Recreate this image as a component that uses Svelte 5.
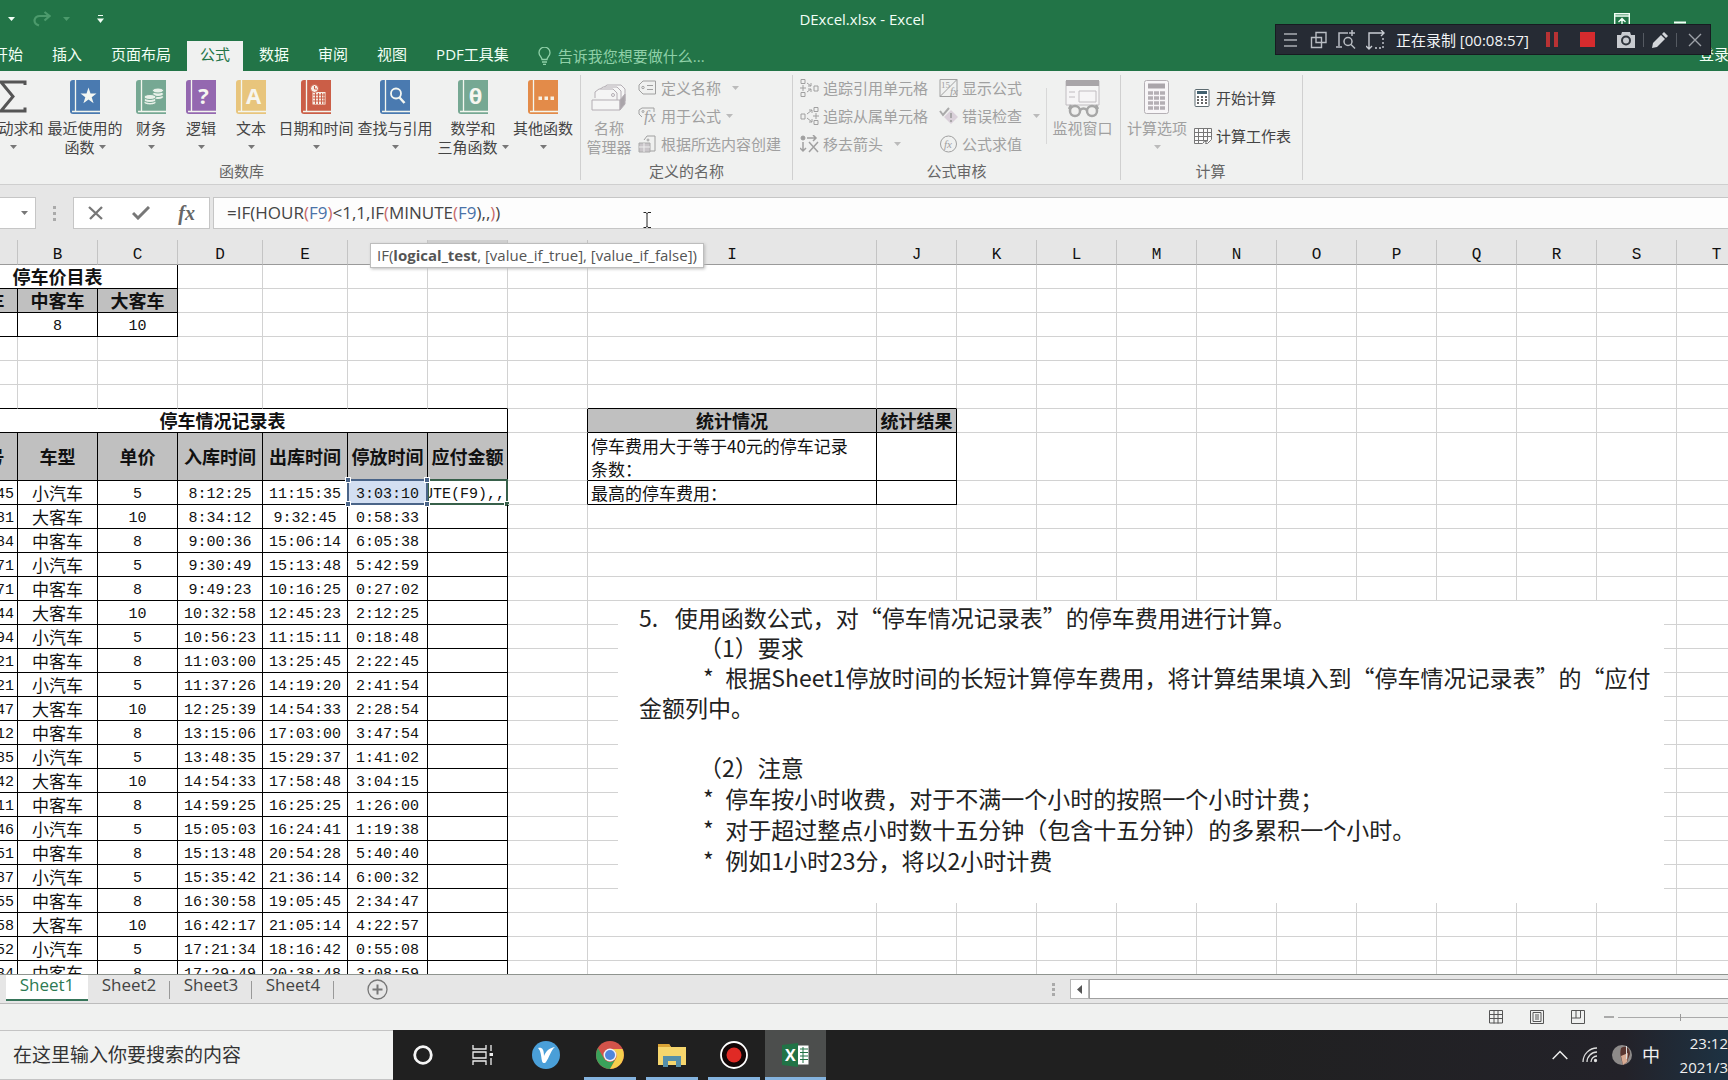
<script>
  const tabs = ["开始", "插入", "页面布局", "公式", "数据", "审阅", "视图", "PDF工具集"];

  const books = [
    { lines: ["最近使用的", "函数"], icon: "star", color: "#4a7ab0" },
    { lines: ["财务"], icon: "coins", color: "#76a893" },
    { lines: ["逻辑"], icon: "?", color: "#9468b0" },
    { lines: ["文本"], icon: "A", color: "#e8c57c" },
    { lines: ["日期和时间"], icon: "date", color: "#cb5e47" },
    { lines: ["查找与引用"], icon: "search", color: "#4a7ab0" },
    { lines: ["数学和", "三角函数"], icon: "θ", color: "#76a893" },
    { lines: ["其他函数"], icon: "dots", color: "#e38b49" },
  ];

  const letters = "ABCDEFGHIJKLMNOPQRST".split("");
  const rowCount = 29;

  const records = [
    ["45", "小汽车", "5", "8:12:25", "11:15:35", "3:03:10"],
    ["81", "大客车", "10", "8:34:12", "9:32:45", "0:58:33"],
    ["84", "中客车", "8", "9:00:36", "15:06:14", "6:05:38"],
    ["71", "小汽车", "5", "9:30:49", "15:13:48", "5:42:59"],
    ["71", "中客车", "8", "9:49:23", "10:16:25", "0:27:02"],
    ["44", "大客车", "10", "10:32:58", "12:45:23", "2:12:25"],
    ["94", "小汽车", "5", "10:56:23", "11:15:11", "0:18:48"],
    ["21", "中客车", "8", "11:03:00", "13:25:45", "2:22:45"],
    ["21", "小汽车", "5", "11:37:26", "14:19:20", "2:41:54"],
    ["47", "大客车", "10", "12:25:39", "14:54:33", "2:28:54"],
    ["12", "中客车", "8", "13:15:06", "17:03:00", "3:47:54"],
    ["85", "小汽车", "5", "13:48:35", "15:29:37", "1:41:02"],
    ["42", "大客车", "10", "14:54:33", "17:58:48", "3:04:15"],
    ["11", "中客车", "8", "14:59:25", "16:25:25", "1:26:00"],
    ["46", "小汽车", "5", "15:05:03", "16:24:41", "1:19:38"],
    ["51", "中客车", "8", "15:13:48", "20:54:28", "5:40:40"],
    ["87", "小汽车", "5", "15:35:42", "21:36:14", "6:00:32"],
    ["55", "中客车", "8", "16:30:58", "19:05:45", "2:34:47"],
    ["58", "大客车", "10", "16:42:17", "21:05:14", "4:22:57"],
    ["52", "小汽车", "5", "17:21:34", "18:16:42", "0:55:08"],
    ["84", "中客车", "8", "17:29:49", "20:38:48", "3:08:59"],
  ];

  const cells = {
    A1: { text: "停车价目表", kind: "title", span: 3 },
    A2: { text: "小汽车", kind: "head" },
    B2: { text: "中客车", kind: "head" },
    C2: { text: "大客车", kind: "head" },
    B3: { text: "8", kind: "num" },
    C3: { text: "10", kind: "num" },
    A7: { text: "停车情况记录表", kind: "title", span: 7 },
    A8: { text: "车牌号", kind: "head" },
    B8: { text: "车型", kind: "head" },
    C8: { text: "单价", kind: "head" },
    D8: { text: "入库时间", kind: "head" },
    E8: { text: "出库时间", kind: "head" },
    F8: { text: "停放时间", kind: "head" },
    G8: { text: "应付金额", kind: "head" },
    I7: { text: "统计情况", kind: "head" },
    J7: { text: "统计结果", kind: "head" },
    I8: { text: "停车费用大于等于40元的停车记录条数：", kind: "note" },
    I9: { text: "最高的停车费用：", kind: "note" },
    G9: { text: "UTE(F9),,", kind: "num edit" },
  };

  records.forEach((rec, i) => {
    rec.forEach((text, c) => {
      let kind = c === 1 ? "text" : "num";
      if (c === 0) kind = "num plate";
      cells[letters[c] + (i + 9)] = { text, kind };
    });
  });
  cells.F9.kind = "num ref";

  // regions drawn with black cell borders: [first row, last row, first col, last col]
  const boxes = [
    [1, 3, 0, 2],
    [7, rowCount, 0, 6],
    [7, 9, 8, 9],
  ];

  function boxed(r, c) {
    return boxes.some(([r1, r2, c1, c2]) => r >= r1 && r <= r2 && c >= c1 && c <= c2);
  }

  const rows = [];
  for (let r = 1; r <= rowCount; r++) {
    const list = [];
    for (let c = 0; c < letters.length; c++) {
      const cell = cells[letters[c] + r] || { text: "", kind: "" };
      const span = cell.span || 1;
      const last = c + span - 1;
      list.push({
        ...cell,
        span,
        right: boxed(r, last) || boxed(r, last + 1),
        bottom: boxed(r, c) || boxed(r + 1, c),
      });
      c = last;
    }
    rows.push({ r, list });
  }
</script>

{#snippet caret()}
  <svg class="caret" width="7" height="4" viewBox="0 0 7 4"><path d="M0 0h7L3.5 4z" fill="currentColor" /></svg>
{/snippet}

{#snippet book(icon, color)}
  <svg width="30" height="34" viewBox="0 0 30 34">
    <path d="M3 0h27v34H3a3 3 0 0 1-3-3V3a3 3 0 0 1 3-3z" fill={color} />
    <path d="M5.500 0v31M2 31.500h28" stroke="#f3f6ee" stroke-width="1.300" fill="none" />
    {#if icon === "star"}
      <path d="M18.500 7.500l2 6h6l-4.800 3.700 1.900 6-5.100-3.700-5.100 3.700 1.900-6-4.800-3.700h6z" fill="#f4f7f2" />
    {:else if icon === "coins"}
      <g fill="#e9f1e9" stroke={color} stroke-width="1">
        <ellipse cx="22" cy="17" rx="5.500" ry="2.500" />
        <ellipse cx="22" cy="14" rx="5.500" ry="2.500" />
        <ellipse cx="22" cy="10.500" rx="5.500" ry="2.500" />
        <ellipse cx="14" cy="22.500" rx="6" ry="2.500" />
        <ellipse cx="14" cy="20" rx="6" ry="2.500" />
        <ellipse cx="14" cy="17" rx="6" ry="2.500" />
      </g>
    {:else if icon === "date"}
      <path d="M11.500 12h13v12.500h-13z" fill="#f7ede4" />
      <path d="M12 15h12M12 18h12M12 21h12M14.500 13v11M17.500 13v11M20.500 13v11M23 13v11" stroke={color} stroke-width="1" />
      <circle cx="13.500" cy="8.500" r="4" fill="#f7ede4" stroke={color} />
      <path d="M13.500 6v3h2.500" stroke={color} fill="none" />
    {:else if icon === "search"}
      <circle cx="16" cy="13.500" r="5" fill="none" stroke="#f4f7f2" stroke-width="1.800" />
      <path d="M19.500 17.500l5 5.500" stroke="#f4f7f2" stroke-width="2.500" />
    {:else if icon === "dots"}
      <path d="M10.500 16.500h3.500v3.500h-3.500zM16.500 16.500h3.500v3.500h-3.500zM22.500 16.500h3.500v3.500h-3.500z" fill="#f8f1e4" />
    {:else}
      <text x="17.500" y="24" text-anchor="middle" fill="#f6f6f0">{icon}</text>
    {/if}
  </svg>
{/snippet}

<div class="app">
  <header>
    <div class="titlebar">
      <div class="quick">
        <button aria-label="撤消选项">{@render caret()}</button>
        <button class="dim" aria-label="恢复">
          <svg width="18" height="16" viewBox="0 0 18 16"><path d="M6 14.500C-1 12 1 5 7 5h9M11.500 1l5 4-5 4.500" fill="none" stroke="currentColor" stroke-width="2.200" /></svg>
        </button>
        <button class="dim" aria-label="恢复选项">{@render caret()}</button>
        <button class="custom" aria-label="自定义快速访问工具栏">
          <svg width="7" height="8" viewBox="0 0 7 8"><path d="M1 .500h5" stroke="currentColor" /><path d="M0 3.500h7L3.500 8z" fill="currentColor" /></svg>
        </button>
      </div>
      <h1>DExcel.xlsx - Excel</h1>
      <div class="winbtns">
        <button aria-label="功能区显示选项">
          <svg width="16" height="16" viewBox="0 0 16 16"><path d="M.700.700h14.600v14H.700zM.700 3h14.600M8 14V6M4.500 9L8 5.500 11.500 9" fill="none" stroke="currentColor" stroke-width="1.400" /></svg>
        </button>
        <button aria-label="最小化">
          <svg width="12" height="16" viewBox="0 0 12 16"><path d="M0 9.500h12" stroke="currentColor" stroke-width="2" /></svg>
        </button>
      </div>
    </div>
    <nav>
      {#each tabs as tab}
        <button class="tab" class:active={tab === "公式"}>{tab}</button>
      {/each}
      <label class="tell">
        <svg width="13" height="18" viewBox="0 0 13 18"><path d="M4 12.500C4 10 1 9 1 5.700a5.500 5.500 0 0 1 11 0C12 9 9 10 9 12.500zM4 15h5M5 17.300h3" fill="none" stroke="currentColor" stroke-width="1.300" /></svg>
        <input aria-label="操作说明搜索" placeholder="告诉我您想要做什么..." />
      </label>
      <a class="login" href="#login">登录</a>
    </nav>
  </header>

  <section class="ribbon">
    <div class="group lib">
      <div class="tools books">
        <button class="big">
          <svg class="sigma" width="30" height="34" viewBox="0 0 30 34"><path d="M26 5V2H2l12 14.500L2 31h24v-3.500" fill="none" stroke="#555" stroke-width="3" /></svg>
          <span>自动求和</span>
          <span>{@render caret()}</span>
        </button>
        {#each books as b}
          <button class="big">
            {@render book(b.icon, b.color)}
            <span>{b.lines[0]}</span>
            <span>{b.lines[1] || ""}{@render caret()}</span>
          </button>
        {/each}
      </div>
      <div class="caption">函数库</div>
    </div>

    <div class="group names">
      <div class="tools off">
        <button class="big">
          <svg width="36" height="34" viewBox="0 0 36 34" fill="#f5f5f5" stroke="#b4aeb4">
            <path d="M12 14V8l4-3h14l4 4v12" /><path d="M8 16v-6l4-3h14l4 4v10" /><path d="M4 18v-6l4-3h14l4 4v8" />
            <circle cx="22" cy="15" r="1.500" />
            <path d="M1 20h28v10H1z" /><path d="M29 20l5-6v10l-5 6z" fill="#aaa5aa" />
          </svg>
          <span>名称</span>
          <span>管理器</span>
        </button>
        <div class="stack">
          <button class="small">
            <svg width="20" height="18" viewBox="0 0 20 18" fill="none" stroke="currentColor"><path d="M5 2h12.500v13H5L1 11V6z" /><circle cx="5" cy="8.500" r="1.200" /><path d="M9 6.500h6M9 10.500h6" /></svg>
            定义名称 {@render caret()}
          </button>
          <button class="small tight">
            <svg width="20" height="18" viewBox="0 0 20 18" fill="none" stroke="currentColor"><path d="M4 10L1 7V3l3-2h12v4" /><circle cx="5" cy="4.500" r="1" /><text class="fx" x="6" y="15">fx</text></svg>
            用于公式 {@render caret()}
          </button>
          <button class="small">
            <svg width="20" height="18" viewBox="0 0 20 18" fill="none" stroke="currentColor"><path d="M6 5l3-4h8v15h-5" /><circle cx="10" cy="5" r="1" /><path d="M1 8h11v9H1z" fill="#c9c5c9" stroke="#aaa" /><path d="M1 12h11M6 8v9" stroke="#eee" /></svg>
            根据所选内容创建
          </button>
        </div>
      </div>
      <div class="caption">定义的名称</div>
    </div>

    <div class="group audit">
      <div class="tools off">
        <div class="stack first">
          <button class="small">
            <svg width="20" height="18" viewBox="0 0 20 18" fill="none" stroke="currentColor"><path d="M1 .500h4v4H1zM1 13.500h4v4H1zM14 7h4v5h-4zM0 9h6M3 6v6M7 4l4 3M11 4v3H8M7 13l4-3M11 13v-3H8" /></svg>
            追踪引用单元格
          </button>
          <button class="small">
            <svg width="20" height="18" viewBox="0 0 20 18" fill="none" stroke="currentColor"><path d="M14 .500h4v4h-4zM14 13.500h4v4h-4zM1 7h4v5H1zM13 9h6M16 6v6M7 7l5-4M9 3h3v3M7 11l5 4M9 15h3v-3" /></svg>
            追踪从属单元格
          </button>
          <button class="small">
            <svg width="20" height="18" viewBox="0 0 20 18" fill="none" stroke="currentColor"><circle cx="3" cy="3" r="2" fill="currentColor" /><path d="M7 3h9M13 0l3 3-3 3M3 7v9M0 13l3 3 3-3" stroke-width="1.500" /><path d="M9 7l9 10M18 7L9 17" stroke-width="1.500" /></svg>
            移去箭头 {@render caret()}
          </button>
        </div>
        <div class="stack second">
          <button class="small">
            <svg width="20" height="18" viewBox="0 0 20 18" fill="none" stroke="currentColor"><path d="M1 .500h17v17H1zM18 .500L1 17.500" /><text class="tiny" x="2" y="9">15</text><text class="fx low" x="11" y="16">fx</text></svg>
            显示公式
          </button>
          <button class="small">
            <svg width="20" height="18" viewBox="0 0 20 18" fill="none"><path d="M1 4l3 4 6-7" stroke="#aaa" stroke-width="2" /><path d="M12 3l7 7-7 7-7-7z" fill="#d9d0d9" /><path d="M12 6v5M12 13v2" stroke="#999" stroke-width="1.500" /></svg>
            错误检查 {@render caret()}
          </button>
          <button class="small">
            <svg width="20" height="18" viewBox="0 0 20 18" fill="none" stroke="currentColor"><circle cx="9.500" cy="9" r="8" /><text class="fx low" x="5" y="13">fx</text></svg>
            公式求值
          </button>
        </div>
        <button class="big watch">
          <svg width="36" height="38" viewBox="0 0 36 38" fill="none" stroke="#c0bcc0"><path d="M1 1h33v24H1z" fill="#f6f5f6" /><path d="M1 3h33" stroke="#a9a5a9" stroke-width="6" /><path d="M14 11h17v11H14zM4 12h6M4 17h6" /><g stroke="#a6a6a6" stroke-width="2.500"><circle cx="10" cy="31" r="5" fill="#f0f0ef" /><circle cx="27" cy="31" r="5" fill="#f0f0ef" /><path d="M15 30q3.500-3 7 0M4 29l2-4M33 29l-2-4" /></g></svg>
          <span>监视窗口</span>
        </button>
      </div>
      <div class="caption">公式审核</div>
    </div>

    <div class="group calc">
      <div class="tools">
        <button class="big off">
          <svg width="26" height="34" viewBox="0 0 26 34"><rect x=".500" y=".500" width="24" height="33" rx="2" fill="#f8f6f8" stroke="#b5b0b5" /><path d="M4 6h17" stroke="#aaa5aa" stroke-width="5" /><path d="M4 13h17M4 18h17M4 23h17M4 28h17" stroke="#b4afb4" stroke-width="3.500" stroke-dasharray="5 1" /></svg>
          <span>计算选项</span>
          <span>{@render caret()}</span>
        </button>
        <div class="stack pair">
          <button class="small">
            <svg width="20" height="18" viewBox="0 0 20 18"><rect x="2" y=".500" width="14" height="17" rx="1" fill="#fff" stroke="#5d6b70" /><path d="M4 3.500h10" stroke="#42616f" stroke-width="3" /><path d="M4 8h10M4 11h10M4 14h10" stroke="#666" stroke-width="1.800" stroke-dasharray="2 2" /></svg>
            开始计算
          </button>
          <button class="small">
            <svg width="20" height="18" viewBox="0 0 20 18" fill="#fbfbfb" stroke="#777"><path d="M1.500 16.500v-15h17v11l-4 4h-2l1-2h-2l-2 2z" /><path d="M1.500 5.500h17M1.500 9.500h17M1.500 13.500h13M5.500 1.500v15M10.500 1.500v13M14.500 1.500v13" fill="none" /></svg>
            计算工作表
          </button>
        </div>
      </div>
      <div class="caption">计算</div>
    </div>
  </section>

  <section class="formula-row">
    <button class="namebox" aria-label="名称框">{@render caret()}</button>
    <svg class="grip" width="3" height="15" viewBox="0 0 3 15"><path d="M1.500 0v15" stroke="#aaa" stroke-width="3" stroke-dasharray="3 3" /></svg>
    <div class="fbuttons">
      <button aria-label="取消"><svg width="16" height="14" viewBox="0 0 16 14"><path d="M1 1l13 12M14 1L2 13" stroke="#777" stroke-width="2.300" /></svg></button>
      <button aria-label="输入"><svg width="18" height="14" viewBox="0 0 18 14"><path d="M1 7l5 5L17 1" fill="none" stroke="#777" stroke-width="3" /></svg></button>
      <button class="insert">fx</button>
    </div>
    <div class="formula" role="textbox" tabindex="0" aria-label="编辑栏" contenteditable="true">=IF(HOUR<i>(</i><b>F9</b><i>)</i>&lt;1,1,IF<i>(</i>MINUTE<i>(</i><b>F9</b>),,<i>)</i>)</div>
    <svg class="ibeam" width="8" height="16" viewBox="0 0 8 16"><path d="M.500.500h2.500l1 1 1-1H8M4 1v14M.500 15.500H3l1-1 1 1h3" fill="none" stroke="#222" /></svg>
  </section>

  <main>
    <table>
      <colgroup>
        {#each letters as l}
          <col class="col-{l}" />
        {/each}
      </colgroup>
      <thead>
        <tr>
          {#each letters as l}
            <th class:current={l === "G"}>{l === "A" || l === "F" || l === "G" || l === "H" ? "" : l}</th>
          {/each}
        </tr>
      </thead>
      <tbody>
        {#each rows as row}
          <tr class:tall={row.r === 8}>
            {#each row.list as cell}
              <td class={cell.kind} class:right={cell.right} class:bottom={cell.bottom} colspan={cell.span}>
                <div>{cell.text}</div>
                {#if cell.kind === "num ref"}
                  <span class="frame"><i></i><i></i><i></i><i></i></span>
                {:else if cell.kind === "num edit"}
                  <span class="frame"><i></i></span>
                {/if}
              </td>
            {/each}
          </tr>
        {/each}
      </tbody>
    </table>
    <div class="hint">IF(<b>logical_test</b>, [value_if_true], [value_if_false])</div>
    <article class="task">
      <p>5.&ensp; 使用函数公式，对“停车情况记录表”的停车费用进行计算。</p>
      <p class="sub">（1）要求</p>
      <p class="item">*&ensp;根据Sheet1停放时间的长短计算停车费用，将计算结果填入到“停车情况记录表”的“应付</p>
      <p>金额列中。</p>
      <p class="sub gap">（2）注意</p>
      <p class="item">*&ensp;停车按小时收费，对于不满一个小时的按照一个小时计费；</p>
      <p class="item">*&ensp;对于超过整点小时数十五分钟（包含十五分钟）的多累积一个小时。</p>
      <p class="item">*&ensp;例如1小时23分，将以2小时计费</p>
    </article>
  </main>

  <section class="sheets">
    <button class="sheet on">Sheet1</button>
    <button class="sheet">Sheet2</button>
    <button class="sheet">Sheet3</button>
    <button class="sheet">Sheet4</button>
    <button class="add" aria-label="新工作表">
      <svg width="21" height="21" viewBox="0 0 21 21"><circle cx="10.500" cy="10.500" r="9.500" fill="none" stroke="#777" stroke-width="1.300" /><path d="M5.500 10.500h10M10.500 5.500v10" stroke="#777" stroke-width="2" /></svg>
    </button>
    <div class="hscroll">
      <svg width="3" height="15" viewBox="0 0 3 15"><path d="M1.500 1v14" stroke="#aaa" stroke-width="3" stroke-dasharray="3 2" /></svg>
      <button aria-label="向左滚动"><svg width="5" height="9" viewBox="0 0 5 9"><path d="M5 0v9L0 4.500z" fill="#555" /></svg></button>
      <span class="track"></span>
    </div>
  </section>

  <footer>
    <button aria-label="普通"><svg width="14" height="14" viewBox="0 0 14 14"><path d="M.500.500h13v12.500H.500zM.500 4.500h13M.500 8.500h13M5 .500v13M9 .500v13" fill="none" stroke="#555" /></svg></button>
    <button aria-label="页面布局"><svg width="14" height="14" viewBox="0 0 14 14"><path d="M.500.500h13v13H.500zM3 2.500h8v9H3zM5 5h4M5 7h4M5 9h4" fill="none" stroke="#555" /></svg></button>
    <button aria-label="分页预览"><svg width="14" height="14" viewBox="0 0 14 14"><path d="M.500.500h13v13H.500zM.500 8h9V.500M5 .500V8" fill="none" stroke="#555" /></svg></button>
    <span class="minus"></span>
    <span class="zoom"></span>
  </footer>

  <section class="taskbar">
    <input class="search" aria-label="搜索" placeholder="在这里输入你要搜索的内容" />
    <button aria-label="Cortana"><svg width="22" height="22" viewBox="0 0 22 22"><circle cx="11" cy="11" r="8.300" fill="none" stroke="#f5f5f5" stroke-width="2.800" /></svg></button>
    <button aria-label="任务视图"><svg width="22" height="20" viewBox="0 0 22 20" fill="none" stroke="#eee" stroke-width="1.300"><path d="M1 0v4h13V0M1 7h13v6H1zM1 20v-4h13v4M19 0v6M19 13v7" /><path d="M17.500 8h3.500v3h-3.500z" fill="#eee" stroke="none" /></svg></button>
    <button class="bird" aria-label="浏览器"><svg width="28" height="28" viewBox="0 0 28 28"><circle cx="14" cy="14" r="14" fill="#4a9fd8" /><path d="M6 7c4-1 6 1 6 8 2-5 5-8 11-9-4 3-6 11-9 15-1 2-4 1-4-1-1-5-1-10-4-13z" fill="#fff" /></svg></button>
    <button class="run" aria-label="Chrome"><svg width="28" height="28" viewBox="0 0 28 28"><circle cx="14" cy="14" r="14" fill="#d2534a" /><path d="M1.900 7A14 14 0 0 0 14 28l6-10.500A7 7 0 0 1 8 17.500z" fill="#3aa25a" /><path d="M14 28A14 14 0 0 0 26.500 8H14a6.500 6.500 0 0 1 6 9.500z" fill="#f5cf4c" /><circle cx="14" cy="14" r="6.500" fill="#eef2f8" /><circle cx="14" cy="14" r="5" fill="#4f86dc" /></svg></button>
    <button class="run" aria-label="文件资源管理器"><svg width="28" height="24" viewBox="0 0 28 24"><path d="M0 1h11l2 3h15v18H0z" fill="#f6d66d" /><path d="M0 1h11l2 3H0z" fill="#d9a336" /><path d="M5 24V13h18v11h-5v-6h-8v6z" fill="#568fa9" /></svg></button>
    <button class="run" aria-label="录屏"><svg width="28" height="28" viewBox="0 0 28 28"><circle cx="14" cy="14" r="13" fill="#120606" stroke="#fff" stroke-width="1.800" /><circle cx="14" cy="14" r="7.500" fill="#e02a25" /></svg></button>
    <button class="run excel" aria-label="Excel"><svg width="28" height="24" viewBox="0 0 28 24"><path d="M0 2l16-2v24L0 22z" fill="#217346" /><path d="M16 2.500h10.500v19H16z" fill="#fff" /><path d="M18 6h8M18 9.500h8M18 13h8M18 16.500h8M21 4v16" stroke="#217346" /><text x="3" y="18" fill="#fff">X</text></svg></button>
    <div class="tray">
      <svg width="16" height="10" viewBox="0 0 16 10"><path d="M.700 9L8 1.500 15.300 9" fill="none" stroke="#eee" stroke-width="1.500" /></svg>
      <svg width="16" height="16" viewBox="0 0 16 16" fill="none" stroke="#ddd" stroke-width="1.300"><path d="M1 15A14 14 0 0 1 15 1M5 15A10 10 0 0 1 15 5M9 15a6 6 0 0 1 6-6" /><circle cx="13.500" cy="13.500" r="1" fill="#fff" /></svg>
      <svg width="20" height="20" viewBox="0 0 20 20"><circle cx="10" cy="10" r="10" fill="#8d8a89" /><path d="M9 3c5-3 9 0 9 6l-3 8-4 3c-1-6-4-9-2-17z" fill="#5a3630" /><path d="M9 11l7-3-1 9-4 3z" fill="#d8ab94" /><path d="M14.500 1v13" stroke="#ddd" /></svg>
      <span class="ime">中</span>
      <time>23:12<br />2021/3</time>
    </div>
  </section>

  <div class="recorder">
    <button aria-label="菜单"><svg width="18" height="18" viewBox="0 0 18 18"><path d="M2 3h13M2 9h13M2 15h13" stroke="#a9adb3" stroke-width="1.500" /></svg></button>
    <button aria-label="窗口"><svg width="18" height="18" viewBox="0 0 18 18" fill="none" stroke="#b9bdc3" stroke-width="1.400"><path d="M6 1.500h10v10H6zM1.500 6.500h10v10h-10z" /></svg></button>
    <button class="lens" aria-label="缩放"><svg width="20" height="20" viewBox="0 0 20 20" fill="none" stroke="#b9bdc3" stroke-width="1.500"><path d="M3 16V3h9M0 17h6M16 0v6M13 3h6" /><circle cx="12" cy="11.500" r="4" /><path d="M15 14.500l4 4" /></svg></button>
    <button aria-label="区域"><svg width="20" height="20" viewBox="0 0 20 20" fill="none" stroke="#c9cdd3" stroke-width="1.400"><path d="M3 19V3h15M0 16l3 3 3-3M15 0l3 3-3 3" /><path d="M17 8v10H8" stroke-dasharray="2 2" /></svg></button>
    <span class="status">正在录制 [00:08:57]</span>
    <button class="pause" aria-label="暂停"><svg width="12" height="15" viewBox="0 0 12 15"><path d="M0 0h4v15H0zM8 0h4v15H8z" fill="#b83234" /></svg></button>
    <button class="stop" aria-label="停止"><svg width="15" height="15" viewBox="0 0 15 15"><path d="M0 0h15v15H0z" fill="#d62b2e" /></svg></button>
    <button aria-label="截图"><svg width="20" height="18" viewBox="0 0 20 18"><path d="M1 4h4l1-3h8l1 3h4v13H1z" fill="#c8cbd0" /><circle cx="10" cy="9.500" r="4" fill="none" stroke="#30353d" stroke-width="2" /></svg></button>
    <span class="bar"></span>
    <button aria-label="画笔"><svg width="18" height="18" viewBox="0 0 18 18"><path d="M1 17l1-5L10 4l4 4-8 8zM11 3l2-2 4 4-2 2z" fill="#d3d6da" /></svg></button>
    <span class="bar"></span>
    <button class="close" aria-label="关闭"><svg width="14" height="14" viewBox="0 0 14 14"><path d="M1 1l12 12M13 1L1 13" stroke="#9da1a8" stroke-width="1.400" /></svg></button>
  </div>
</div>

<style>
  :global(body) {
    margin: 0;
    background: #fff;
  }

  .app {
    position: relative;
    display: flex;
    flex-direction: column;
    height: 100vh;
    overflow: hidden;
    font-family: "Open Sans", "Noto Sans CJK SC", sans-serif;
    font-size: 15px;
    line-height: 18px;
    color: #444;
    white-space: nowrap;
  }

  button {
    display: inline-flex;
    align-items: center;
    justify-content: center;
    padding: 0;
    border: 0;
    background: none;
    color: inherit;
    font: inherit;
    white-space: nowrap;
    flex: none;
  }

  input {
    padding: 0;
    border: 0;
    outline: 0;
    background: none;
    font: inherit;
  }

  svg {
    flex: none;
  }

  header {
    background: #227447;
    color: #f2fff6;
  }

  .titlebar {
    display: grid;
    grid-template-columns: 1fr auto 1fr;
    height: 41px;
  }

  .quick {
    display: flex;
    align-items: center;
    gap: 12px;
    padding-left: 8px;
    padding-bottom: 3px;
  }

  .quick .dim {
    margin-left: 6px;
    color: #4c9a6c;
  }

  .quick .dim + .dim {
    margin-left: 0;
  }

  .quick .custom {
    margin-left: 15px;
  }

  h1 {
    margin: 0;
    padding-right: 4px;
    font-size: 15px;
    font-weight: 400;
    line-height: 38px;
  }

  .winbtns {
    display: flex;
    align-items: center;
    justify-content: flex-end;
    gap: 44px;
    padding-right: 42px;
  }

  nav {
    display: flex;
    gap: 3px;
    height: 30px;
    margin-left: -20px;
    overflow: hidden;
  }

  .tab {
    padding: 0 13px 4px;
  }

  .tab.active {
    background: #f0f1f0;
    color: #227447;
  }

  .tell {
    display: flex;
    align-items: center;
    gap: 7px;
    margin-left: 13px;
    color: #8fd0a8;
  }

  .tell input {
    width: 180px;
  }

  .tell input::placeholder {
    color: #8fd0a8;
    opacity: 1;
  }

  .login {
    margin-left: auto;
    width: 29px;
    line-height: 27px;
    color: #f2fff6;
    text-decoration: none;
  }

  .ribbon {
    display: flex;
    height: 113px;
    background: #f0f1f0;
    border-bottom: 1px solid #cfcfcf;
  }

  .group {
    display: flex;
    flex-direction: column;
    box-sizing: border-box;
    margin: 4px 0;
    border-right: 1px solid #d0d0d0;
  }

  .lib {
    width: 581px;
  }

  .names {
    width: 212px;
  }

  .audit {
    width: 328px;
  }

  .calc {
    width: 182px;
  }

  .tools {
    display: flex;
    height: 89px;
  }

  .caption {
    text-align: center;
    color: #666;
  }

  .lib .caption {
    padding-right: 97px;
  }

  .calc .caption {
    padding-right: 2px;
  }

  .books {
    display: grid;
    grid-template-columns: 63px 80px 52px 48px 52px 78px 80px 76px 64px;
    margin-left: -18px;
  }

  .big {
    flex-direction: column;
    justify-content: flex-start;
    align-self: flex-start;
    padding-top: 5px;
    overflow: visible;
  }

  .big svg:first-child:not(.caret) {
    margin-bottom: 5px;
  }

  .big span {
    display: flex;
    align-items: center;
    gap: 4px;
    height: 18px;
  }

  .big span:nth-of-type(2) {
    justify-content: center;
    height: 20px;
  }

  .books text {
    font: bold 22px "Open Sans", sans-serif;
  }

  .caret {
    color: #777;
  }

  .quick .caret {
    color: inherit;
  }

  .off {
    color: #a0a0a0;
  }

  .off .caret {
    color: #bbb;
  }

  .names .big {
    width: 56px;
  }

  .stack {
    display: flex;
    flex-direction: column;
    align-items: flex-start;
  }

  .small {
    height: 28px;
    gap: 3px;
    padding-bottom: 2px;
    box-sizing: border-box;
  }

  .small .caret {
    margin-left: 8px;
  }

  .small.tight .caret {
    margin-left: 2px;
  }

  .names .stack {
    padding-left: 1px;
  }

  .fx {
    font: italic 16px "Liberation Serif", serif;
    fill: currentColor;
    stroke: none;
  }

  .fx.low {
    font-size: 11px;
  }

  .tiny {
    font: 9px "Liberation Serif", serif;
    fill: currentColor;
    stroke: none;
  }

  .audit .first {
    box-sizing: border-box;
    width: 146px;
    padding-left: 7px;
  }

  .audit .second {
    width: 107px;
  }

  .watch {
    align-self: flex-start;
    width: 73px;
    margin-left: 0;
    position: relative;
  }

  .watch::before {
    content: "";
    position: absolute;
    left: 0;
    top: 13px;
    height: 56px;
    border-left: 1px solid #d8d8d8;
  }

  .watch.big svg:first-child:not(.caret) {
    margin-bottom: 1px;
  }

  .calc .big {
    width: 72px;
  }

  .pair {
    gap: 10px;
    padding-top: 10px;
  }

  .formula-row {
    position: relative;
    display: flex;
    align-items: center;
    padding: 12px 0 11px;
    background: #e6e6e6;
  }

  .namebox {
    box-sizing: border-box;
    width: 36px;
    height: 32px;
    padding-left: 13px;
    border: 1px solid #c6c6c6;
    border-left: 0;
    background: #fff;
  }

  .grip {
    margin: 0 17px;
  }

  .fbuttons {
    display: flex;
    justify-content: space-around;
    box-sizing: border-box;
    width: 137px;
    height: 32px;
    border: 1px solid #c6c6c6;
    background: #fff;
  }

  .fbuttons .insert {
    font: italic bold 20px "Liberation Serif", serif;
    color: #666;
  }

  .formula {
    flex: 1;
    box-sizing: border-box;
    height: 32px;
    margin-left: 3px;
    padding-left: 13px;
    border: 1px solid #c6c6c6;
    border-right: 0;
    background: #fdfdfd;
    font-size: 17px;
    line-height: 29px;
  }

  .formula i {
    font-style: normal;
    color: #c96a6a;
  }

  .formula b {
    font-weight: 400;
    color: #4a72a8;
  }

  .ibeam {
    position: absolute;
    left: 643px;
    top: 27px;
  }

  main {
    position: relative;
    flex: 1;
    min-height: 0;
    overflow: hidden;
    background: #fff;
  }

  table {
    table-layout: fixed;
    width: 1px;
    margin-left: -62px;
    border-collapse: separate;
    border-spacing: 0;
    color: #111;
  }

  col {
    width: 80px;
  }

  .col-D,
  .col-E {
    width: 85px;
  }

  .col-I {
    width: 289px;
  }

  th {
    box-sizing: border-box;
    height: 25px;
    padding: 6px 0 0;
    border-right: 1px solid #c4c4c4;
    border-bottom: 1px solid #9a9a9a;
    background: #e6e6e6;
    font: 16px/18px "Liberation Mono", monospace;
  }

  th.current {
    background: #d0d0d0;
  }

  td {
    position: relative;
    box-sizing: border-box;
    height: 24px;
    padding: 0;
    border-right: 1px solid #d2d2d2;
    border-bottom: 1px solid #d2d2d2;
    font-family: "Noto Sans CJK SC", sans-serif;
    font-size: 17px;
    line-height: 23px;
    text-align: center;
  }

  td div {
    max-height: 47px;
    overflow: hidden;
  }

  td.right {
    border-right-color: #000;
  }

  td.bottom {
    border-bottom-color: #000;
  }

  .tall td {
    height: 48px;
  }

  td.title,
  td.head {
    font-size: 18px;
    font-weight: 700;
  }

  td.head {
    background: #c0c0c0;
  }

  td.num {
    padding-top: 4px;
    font-family: "Liberation Mono", monospace;
    font-size: 15px;
    line-height: 19px;
  }

  td.plate {
    padding-right: 3px;
    text-align: right;
  }

  td.note {
    padding: 0 14px 0 3px;
    text-align: left;
    white-space: normal;
  }

  td.ref {
    background: #d3dff2;
  }

  td.edit div {
    display: flex;
    justify-content: flex-end;
    padding-right: 2px;
  }

  .frame {
    position: absolute;
    inset: -2px -1px -1px -1px;
    border: 2px solid #4a6488;
  }

  .frame i {
    position: absolute;
    width: 4px;
    height: 4px;
    background: #4a6488;
    outline: 1px solid #fff;
  }

  .frame i:nth-child(1) {
    right: -3px;
    bottom: -3px;
  }

  .frame i:nth-child(2) {
    left: -3px;
    bottom: -3px;
  }

  .frame i:nth-child(3) {
    left: -3px;
    top: -3px;
  }

  .frame i:nth-child(4) {
    right: -3px;
    top: -3px;
  }

  .ref .frame {
    z-index: 1;
  }

  .edit .frame {
    border-color: #37604a;
  }

  .edit .frame i {
    background: #37604a;
  }

  .hint {
    position: absolute;
    left: 370px;
    top: 3px;
    padding: 0 6px;
    border: 1px solid #bdbdbd;
    background: #fff;
    box-shadow: 1px 1px 3px #bbb;
    font-size: 15px;
    line-height: 23px;
    color: #555;
    z-index: 2;
  }

  .task {
    position: absolute;
    left: 618px;
    right: 64px;
    top: 361px;
    box-sizing: border-box;
    height: 302px;
    padding: 1px 0 0 21px;
    background: #fff;
    font-family: "Noto Sans CJK SC", sans-serif;
    font-size: 23px;
    line-height: 30px;
    color: #222;
  }

  .task p {
    margin: 0;
  }

  .task .sub {
    padding-left: 60px;
  }

  .task .item {
    padding-left: 64px;
  }

  .task .gap {
    margin-top: 30px;
  }

  .task .gap,
  .task .gap ~ p {
    line-height: 31px;
  }

  .sheets {
    display: flex;
    box-sizing: border-box;
    height: 30px;
    padding-left: 6px;
    border-top: 1px solid #8f948f;
    border-bottom: 1px solid #bcbcbc;
    background: #e6e6e6;
  }

  .sheet {
    box-sizing: border-box;
    width: 82px;
    height: 26px;
    padding-bottom: 6px;
    font-size: 17px;
    position: relative;
  }

  .sheet:not(.on)::after {
    content: "";
    position: absolute;
    right: 0;
    top: 6px;
    height: 18px;
    border-right: 1px solid #999;
  }

  .sheet.on {
    padding-bottom: 4px;
    border-bottom: 2px solid #37755a;
    background: #fff;
    color: #2d7a53;
  }

  .add {
    margin-left: 33px;
  }

  .hscroll {
    display: flex;
    align-items: center;
    width: 676px;
    margin-left: auto;
  }

  .hscroll button {
    box-sizing: border-box;
    width: 19px;
    height: 20px;
    margin-left: 15px;
    border: 1px solid #b5b5b5;
    background: #fff;
  }

  .track {
    flex: 1;
    box-sizing: border-box;
    height: 20px;
    border: 1px solid #a0a0a0;
    border-right: 0;
    background: #fff;
  }

  footer {
    display: flex;
    align-items: center;
    justify-content: flex-end;
    gap: 27px;
    height: 26px;
    background: #f0f1f0;
  }

  .minus {
    width: 10px;
    margin-left: -8px;
    border-top: 2px solid #aaa;
  }

  .zoom {
    position: relative;
    width: 110px;
    margin-left: -23px;
    border-top: 1px solid #aaa;
  }

  .zoom::after {
    content: "";
    position: absolute;
    left: 62px;
    top: -4px;
    height: 7px;
    border-left: 1px solid #999;
  }

  .taskbar {
    display: flex;
    height: 50px;
    background: linear-gradient(90deg, #202020 70%, #232229 94%, #1d3243);
  }

  .search {
    box-sizing: border-box;
    width: 393px;
    padding-left: 13px;
    border: solid #c4c4c4;
    border-width: 1px 0;
    background: #f1f2f1;
    font-size: 19px;
  }

  .search::placeholder {
    color: #333;
    opacity: 1;
  }

  .taskbar button {
    box-sizing: border-box;
    width: 60px;
  }

  .taskbar .bird {
    width: 66px;
  }

  .taskbar .run {
    width: 52px;
    margin: 0 5px;
    border-bottom: 3px solid #84b3de;
    padding-top: 3px;
  }

  .taskbar .run.excel {
    width: 61px;
    margin: 0;
    background: #4c4e4d;
  }

  .excel text {
    font: bold 16px "Open Sans", sans-serif;
  }

  .tray {
    display: flex;
    align-items: center;
    gap: 14px;
    margin-left: auto;
    color: #f0f0f0;
  }

  .ime {
    font-size: 18px;
    margin-left: -4px;
  }

  time {
    width: 50px;
    margin-left: 4px;
    font-size: 15px;
    line-height: 24px;
    text-align: right;
  }

  .recorder {
    position: absolute;
    right: 17px;
    top: 24px;
    display: flex;
    align-items: center;
    box-sizing: border-box;
    height: 31px;
    padding: 0 8px 0 6px;
    gap: 10px;
    border: 1px solid #171b21;
    background: #262b34;
    color: #f2f4f6;
    z-index: 3;
  }

  .recorder .lens {
    margin-left: -2px;
  }

  .recorder .status {
    margin: 0 7px 0 0;
  }

  .recorder .pause {
    margin-right: 12px;
  }

  .recorder .stop {
    margin-right: 11px;
  }

  .recorder .close {
    margin-left: 4px;
  }

  .bar {
    height: 14px;
    margin: 0 -3px;
    border-left: 1px solid #555a62;
  }
</style>
